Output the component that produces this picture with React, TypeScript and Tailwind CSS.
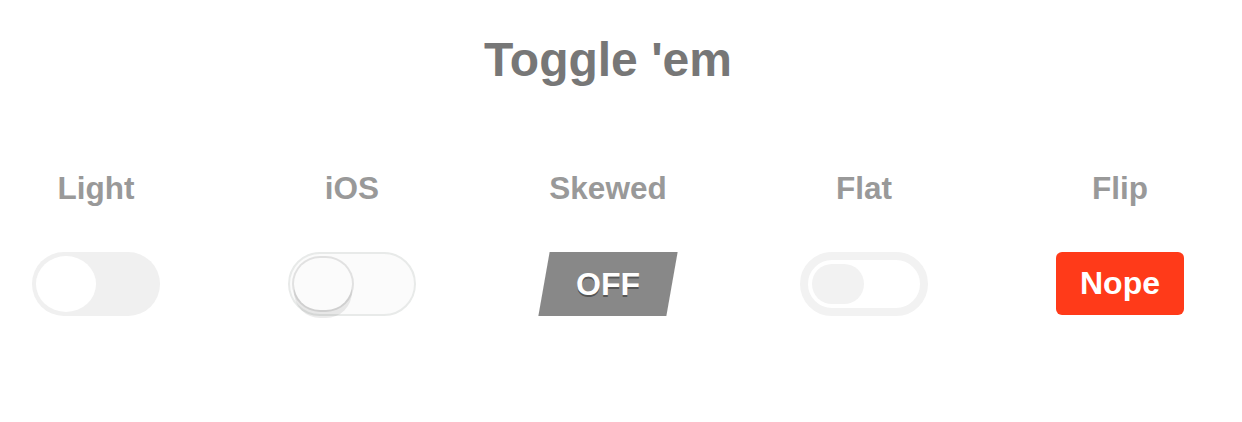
export default function App() {
  return (
    <div className="w-[1216px] bg-white font-['Liberation_Sans',Arial,sans-serif] pb-[106px]">
      <h2 className="pt-[33px] text-center text-[48px] leading-[54px] font-bold text-[#777]">
        Toggle 'em
      </h2>
      <ul className="flex gap-[128px] pl-[32px] mt-[83px]">
        <li className="w-[128px] flex flex-col items-center">
          <h4 className="text-[31.5px] leading-[36px] font-bold text-[#999] whitespace-nowrap">Light</h4>
          <div className="mt-[46px] w-[128px] h-[64px] rounded-full bg-[#f0f0f0] p-[4px]">
            <div className="w-[60px] h-[56px] rounded-[50%] bg-white" />
          </div>
        </li>
        <li className="w-[128px] flex flex-col items-center">
          <h4 className="text-[31.5px] leading-[36px] font-bold text-[#999]">iOS</h4>
          <div className="mt-[46px] w-[128px] h-[64px] rounded-full bg-[#fbfbfb] border-2 border-[#e8eae9] p-[4px]">
            <div className="w-[58px] h-[52px] rounded-[64px] bg-[#fbfbfb] shadow-[0_0_0_2px_rgba(0,0,0,0.1),0_8px_0_rgba(0,0,0,0.08)]" />
          </div>
        </li>
        <li className="w-[128px] flex flex-col items-center">
          <h4 className="text-[31.5px] leading-[36px] font-bold text-[#999]">Skewed</h4>
          <div className="mt-[46px] w-[128px] h-[64px] bg-[#888] skew-x-[-10deg] overflow-hidden flex items-center justify-center">
            <span className="skew-x-[10deg] text-[32px] leading-[64px] font-bold text-white [text-shadow:0_2px_0_rgba(0,0,0,0.4)]">
              OFF
            </span>
          </div>
        </li>
        <li className="w-[128px] flex flex-col items-center">
          <h4 className="text-[31.5px] leading-[36px] font-bold text-[#999]">Flat</h4>
          <div className="mt-[46px] w-[128px] h-[64px] rounded-full bg-white border-[8px] border-[#f2f2f2] p-[4px]">
            <div className="w-[52px] h-[40px] rounded-[32px] bg-[#f2f2f2]" />
          </div>
        </li>
        <li className="w-[128px] flex flex-col items-center">
          <h4 className="text-[31.5px] leading-[36px] font-bold text-[#999]">Flip</h4>
          <div className="mt-[46px] w-[128px] h-[63px] rounded-[6px] bg-[#ff3a19] flex items-center justify-center">
            <span className="text-[32px] leading-[63px] font-bold text-white">Nope</span>
          </div>
        </li>
      </ul>
    </div>
  );
}
